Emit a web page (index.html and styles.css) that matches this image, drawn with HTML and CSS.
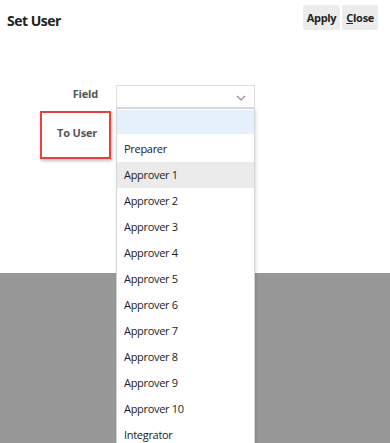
FILE: index.html
```html
<!DOCTYPE html>
<html lang="en">
<head>
    <meta charset="UTF-8">
    <meta name="viewport" content="width=device-width, initial-scale=1.0">
    <title>Set User</title>
    <link rel="stylesheet" href="styles.css">
</head>
<body>
    <div class="dialog">
        <div class="header">
            <h1>Set User</h1>
            <div class="actions">
                <button class="btn">Apply</button>
                <button class="btn"><u>C</u>lose</button>
            </div>
        </div>

        <div class="form">
            <div class="form-row">
                <label class="label">Field</label>
                <div class="control">
                    <div class="select">
                        <svg class="chevron" width="10" height="6" viewBox="0 0 10 6">
                            <path d="M1 1 L5 5 L9 1" fill="none" stroke="#8a8a8a" stroke-width="1.1"/>
                        </svg>
                    </div>
                    <ul class="dropdown">
                        <li class="item blank"></li>
                        <li class="item">Preparer</li>
                        <li class="item hover">Approver 1</li>
                        <li class="item">Approver 2</li>
                        <li class="item">Approver 3</li>
                        <li class="item">Approver 4</li>
                        <li class="item">Approver 5</li>
                        <li class="item">Approver 6</li>
                        <li class="item">Approver 7</li>
                        <li class="item">Approver 8</li>
                        <li class="item">Approver 9</li>
                        <li class="item">Approver 10</li>
                        <li class="item">Integrator</li>
                    </ul>
                </div>
            </div>
            <div class="form-row">
                <label class="label marked">To User</label>
            </div>
        </div>
    </div>
    <div class="overlay"></div>
</body>
</html>
```

FILE: styles.css
```css
body {
    margin: 0;
    height: 443px;
    overflow: hidden;
    font-family: "Open Sans", "Noto Sans", Arial, sans-serif;
    color: #333;
    background-color: #fff;
}
.dialog {
    height: 273px;
    background-color: #fff;
}
.header {
    display: flex;
    justify-content: space-between;
    align-items: flex-start;
    height: 30px;
    box-sizing: border-box;
    padding: 5px 12px 0 7px;
}
h1 {
    margin: 6px 0 0 0;
    font-size: 14px;
    font-weight: bold;
    color: #222;
    letter-spacing: -0.5px;
}
.actions {
    display: flex;
    gap: 2px;
}
.btn {
    height: 25px;
    padding: 0 4px;
    border: none;
    border-radius: 2px;
    background-color: #ececec;
    font-family: inherit;
    font-size: 11px;
    font-weight: bold;
    color: #222;
    letter-spacing: -0.3px;
}
.btn u {
    text-decoration-thickness: 1px;
}
.form {
    padding-top: 55px;
}
.form-row {
    display: flex;
}
.label {
    box-sizing: border-box;
    width: 116px;
    padding-right: 18px;
    text-align: right;
    font-size: 11px;
    font-weight: bold;
    color: #555;
    line-height: 16px;
    padding-top: 1px;
    letter-spacing: -0.2px;
}
.label.marked {
    width: 71px;
    height: 48px;
    margin: 3px 0 0 40px;
    padding: 12px 12px 0 0;
    border: 2px solid #e8403f;
    box-shadow: 1px 2px 3px rgba(0,0,0,0.25);
}
.control {
    position: relative;
}
.select {
    box-sizing: border-box;
    width: 139px;
    height: 23px;
    border: 1px solid #dedede;
    position: relative;
}
.chevron {
    position: absolute;
    right: 8px;
    top: 9px;
}
.dropdown {
    position: absolute;
    top: 23px;
    left: 0;
    box-sizing: border-box;
    width: 139px;
    height: 335px;
    overflow: hidden;
    margin: 0;
    padding: 1px 0 0 0;
    list-style: none;
    background-color: #fff;
    border: 1px solid #d6d6d6;
    border-bottom: none;
    box-shadow: 1px 1px 3px rgba(0,0,0,0.15);
    z-index: 2;
}
.item {
    height: 26px;
    line-height: 26px;
    padding-left: 7px;
    font-size: 11px;
    color: #222;
    letter-spacing: -0.3px;
}
.item.blank {
    height: 24px;
    margin-bottom: 2px;
    background-color: #e6f0fc;
}
.item.hover {
    background-color: #ebebeb;
}
.overlay {
    height: 170px;
    background-color: #989898;
}
```
